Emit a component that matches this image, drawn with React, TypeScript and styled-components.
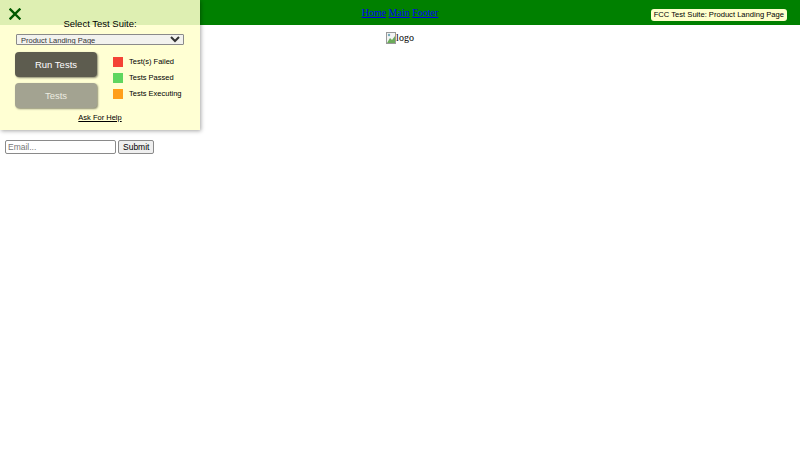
import styled, { createGlobalStyle } from "styled-components";

const GlobalStyle = createGlobalStyle`
  html, body {
    margin: 0;
    padding: 0;
    background: #ffffff;
  }
  body {
    font-family: "Liberation Serif", "Times New Roman", serif;
    width: 800px;
    height: 450px;
    overflow: hidden;
  }
`;

const Page = styled.div`
  position: relative;
  width: 800px;
  height: 450px;
`;

const Header = styled.header`
  height: 25px;
  background: #008000;
  display: grid;
  grid-template-columns: 1fr auto 1fr;
  align-items: center;
`;

const Nav = styled.nav`
  grid-column: 2;
  display: flex;
  gap: 2.5px;
  font-size: 10px;
  margin-top: -1px;
`;

const NavLink = styled.a`
  color: #0000ee;
  text-decoration: underline;
`;

const Badge = styled.div`
  grid-column: 3;
  justify-self: end;
  margin-right: 13px;
  margin-top: 5px;
  background: #ffffcc;
  border-radius: 3px;
  padding: 1px 3px;
  font-family: "Liberation Sans", Arial, sans-serif;
  font-size: 7.6px;
  line-height: 10px;
  color: #000;
`;

const LogoRow = styled.div`
  display: flex;
  justify-content: center;
  padding-top: 7px;
  font-size: 10px;
  line-height: 12px;
`;

const Logo = styled.span`
  display: inline-flex;
  align-items: center;
`;

const Form = styled.form`
  display: flex;
  gap: 2px;
  margin-top: 96px;
  padding-left: 5px;
`;

const EmailInput = styled.input`
  width: 111px;
  height: 14px;
  box-sizing: border-box;
  border: 1px solid #8a8a8a;
  border-radius: 2px;
  padding: 0 2px;
  font-family: "Liberation Sans", Arial, sans-serif;
  font-size: 8.5px;
  &::placeholder {
    color: #777;
  }
`;

const SubmitButton = styled.button`
  height: 14px;
  box-sizing: border-box;
  padding: 0 4px;
  border: 1px solid #8a8a8a;
  border-radius: 2px;
  background: #efefef;
  font-family: "Liberation Sans", Arial, sans-serif;
  font-size: 8.5px;
  color: #000;
`;

const Panel = styled.div`
  position: absolute;
  top: 0;
  left: 0;
  width: 200px;
  height: 130px;
  background: rgba(255, 255, 205, 0.87);
  box-shadow: 1px 1px 4px rgba(0, 0, 0, 0.35);
  font-family: "Liberation Sans", Arial, sans-serif;
  display: flex;
  flex-direction: column;
  align-items: center;
`;

const CloseIcon = styled.svg`
  position: absolute;
  top: 8px;
  left: 9px;
`;

const PanelTitle = styled.div`
  margin-top: 18px;
  font-size: 9.5px;
  line-height: 11px;
  color: #000;
`;

const SuiteSelect = styled.select`
  margin-top: 5px;
  width: 168px;
  height: 11px;
  box-sizing: border-box;
  padding: 0;
  border: 1px solid #8a8a8a;
  border-radius: 1px;
  background: #f2f2ee;
  font-family: "Liberation Sans", Arial, sans-serif;
  font-size: 7.5px;
  line-height: 9px;
  color: #333;
`;

const Controls = styled.div`
  margin-top: 7px;
  width: 170px;
  display: flex;
  gap: 16px;
`;

const ButtonCol = styled.div`
  display: flex;
  flex-direction: column;
  gap: 6px;
`;

const SuiteButton = styled.button<{ $muted?: boolean }>`
  width: 82px;
  height: 25px;
  border: none;
  border-radius: 4px;
  background: ${(p) => (p.$muted ? "#a3a391" : "#5d5c4f")};
  color: ${(p) => (p.$muted ? "#ecece0" : "#ffffff")};
  box-shadow: 1px 1px 2px rgba(0, 0, 0, 0.45);
  font-family: "Liberation Sans", Arial, sans-serif;
  font-size: 9.5px;
  padding: 0;
`;

const Legend = styled.div`
  display: flex;
  flex-direction: column;
  gap: 6px;
  padding-top: 5px;
`;

const LegendItem = styled.div`
  display: flex;
  align-items: center;
  gap: 6px;
  font-size: 7.5px;
  line-height: 10px;
  color: #000;
`;

const Swatch = styled.span<{ $color: string }>`
  width: 10px;
  height: 10px;
  background: ${(p) => p.$color};
`;

const HelpLink = styled.a`
  margin-top: 5px;
  font-size: 7.5px;
  color: #000;
  text-decoration: underline;
`;

export default function App() {
  return (
    <Page>
      <GlobalStyle />
      <Header>
        <Nav>
          <NavLink href="#home">Home</NavLink>
          <NavLink href="#main">Main</NavLink>
          <NavLink href="#footer">Footer</NavLink>
        </Nav>
        <Badge>FCC Test Suite: Product Landing Page</Badge>
      </Header>

      <LogoRow>
        <Logo>
          <svg width="10" height="12" viewBox="0 0 10 12">
            <rect x="0.5" y="0.5" width="9" height="11" fill="#f4f4f4" stroke="#999" />
            <path d="M1 11 L4 6 L6 8 L9 4 L9 11 Z" fill="#6bab5a" />
            <circle cx="3" cy="3" r="1.2" fill="#7ab" />
          </svg>
          logo
        </Logo>
      </LogoRow>

      <Form onSubmit={(e) => e.preventDefault()}>
        <EmailInput type="email" placeholder="Email..." />
        <SubmitButton type="submit">Submit</SubmitButton>
      </Form>

      <Panel>
        <CloseIcon width="12" height="12" viewBox="0 0 12 12">
          <path d="M1.5 1.5 L10.5 10.5 M10.5 1.5 L1.5 10.5" stroke="#005a00" strokeWidth="2.4" strokeLinecap="square" />
        </CloseIcon>
        <PanelTitle>Select Test Suite:</PanelTitle>
        <SuiteSelect defaultValue="landing">
          <option value="landing">Product Landing Page</option>
        </SuiteSelect>
        <Controls>
          <ButtonCol>
            <SuiteButton>Run Tests</SuiteButton>
            <SuiteButton $muted>Tests</SuiteButton>
          </ButtonCol>
          <Legend>
            <LegendItem>
              <Swatch $color="#f44336" />
              Test(s) Failed
            </LegendItem>
            <LegendItem>
              <Swatch $color="#5fd65f" />
              Tests Passed
            </LegendItem>
            <LegendItem>
              <Swatch $color="#ff9f1a" />
              Tests Executing
            </LegendItem>
          </Legend>
        </Controls>
        <HelpLink href="#help">Ask For Help</HelpLink>
      </Panel>
    </Page>
  );
}
